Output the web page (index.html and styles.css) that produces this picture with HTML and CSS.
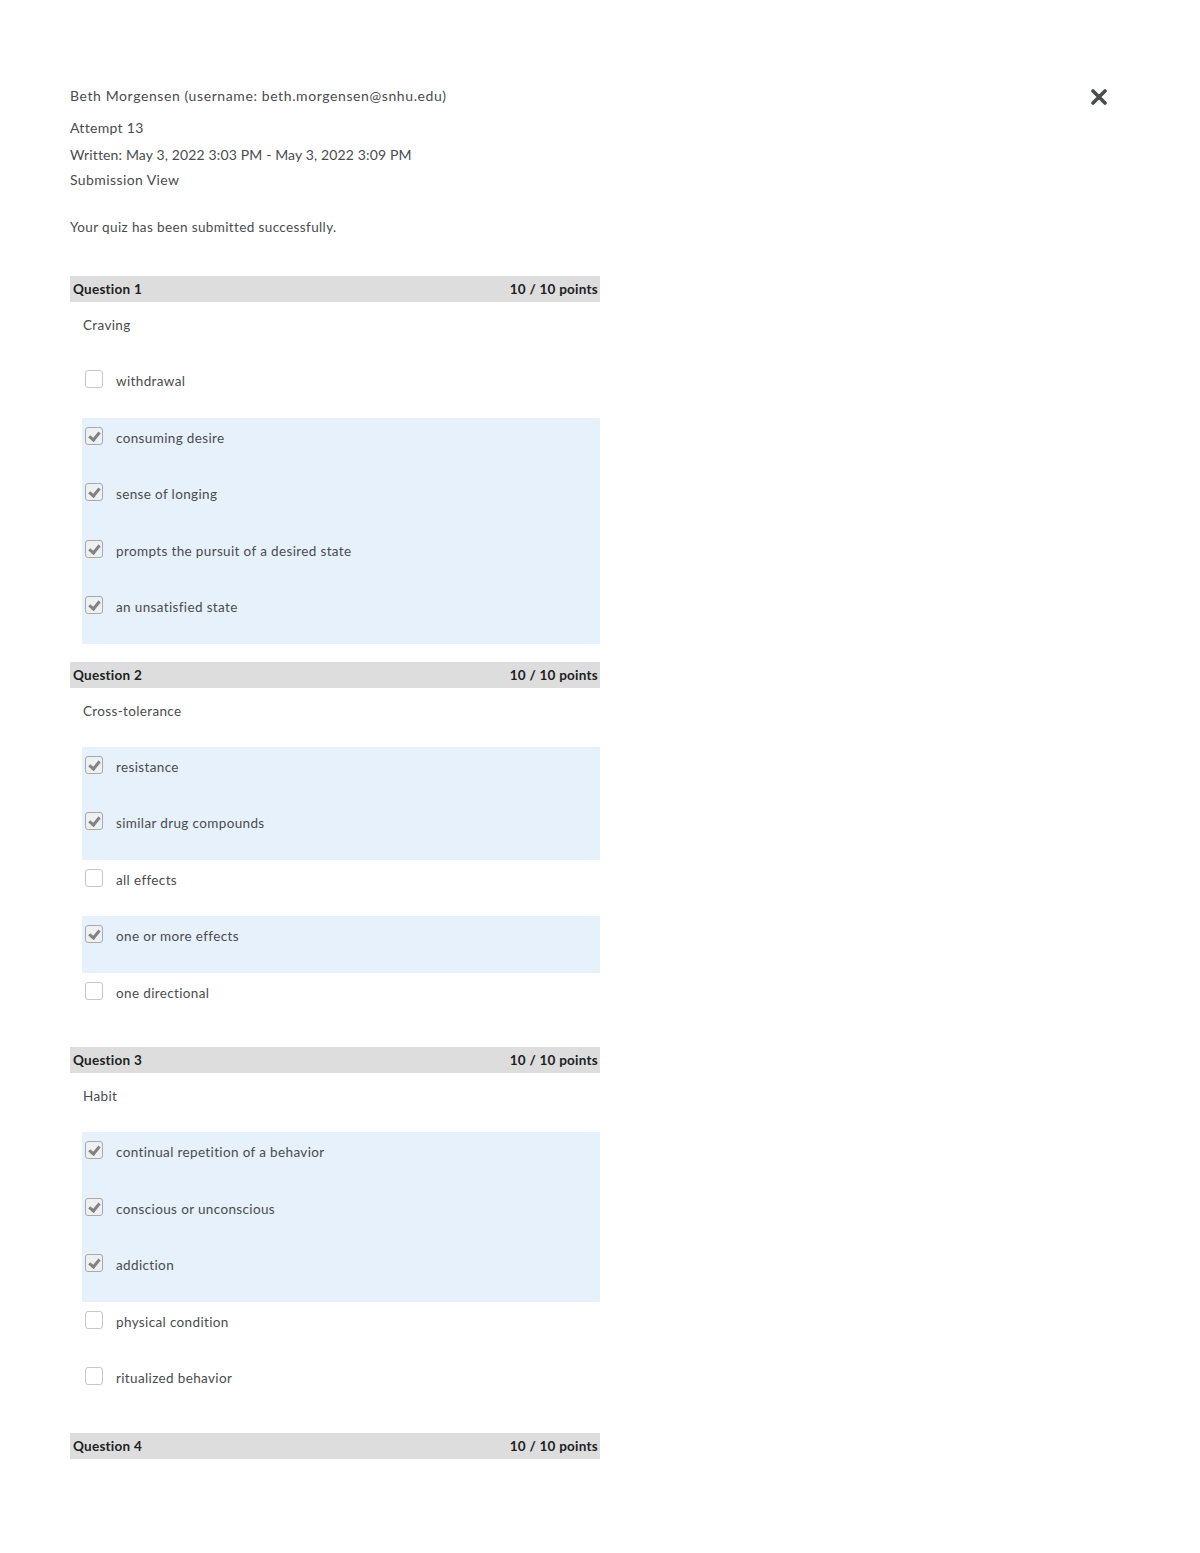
FILE: index.html
```html
<!DOCTYPE html>
<html>
<head>
<meta charset="utf-8">
<link rel="stylesheet" href="styles.css">
</head>
<body>
<div class="page">
  <div class="top">
    <div class="name">Beth Morgensen (username: beth.morgensen@snhu.edu)</div>
    <svg class="close" width="16" height="16" viewBox="0 0 16 16"><path d="M2 2 L14 14 M14 2 L2 14" stroke="#494c4e" stroke-width="3.6" stroke-linecap="round"/></svg>
  </div>
  <div class="attempt">Attempt 13</div>
  <div class="written">Written: May 3, 2022 3:03 PM - May 3, 2022 3:09 PM</div>
  <div class="view">Submission View</div>
  <div class="success">Your quiz has been submitted successfully.</div>

  <div class="question">
    <div class="qhead"><span>Question 1</span><span>10 / 10 points</span></div>
    <div class="prompt">Craving</div>
    <div class="options">
      <div class="opt"><span class="cb"></span><span class="label">withdrawal</span></div>
      <div class="opt sel"><span class="cb on"></span><span class="label">consuming desire</span></div>
      <div class="opt sel"><span class="cb on"></span><span class="label">sense of longing</span></div>
      <div class="opt sel"><span class="cb on"></span><span class="label">prompts the pursuit of a desired state</span></div>
      <div class="opt sel"><span class="cb on"></span><span class="label">an unsatisfied state</span></div>
    </div>
  </div>

  <div class="question">
    <div class="qhead"><span>Question 2</span><span>10 / 10 points</span></div>
    <div class="prompt">Cross-tolerance</div>
    <div class="options">
      <div class="opt sel"><span class="cb on"></span><span class="label">resistance</span></div>
      <div class="opt sel"><span class="cb on"></span><span class="label">similar drug compounds</span></div>
      <div class="opt"><span class="cb"></span><span class="label">all effects</span></div>
      <div class="opt sel"><span class="cb on"></span><span class="label">one or more effects</span></div>
      <div class="opt"><span class="cb"></span><span class="label">one directional</span></div>
    </div>
  </div>

  <div class="question">
    <div class="qhead"><span>Question 3</span><span>10 / 10 points</span></div>
    <div class="prompt">Habit</div>
    <div class="options">
      <div class="opt sel"><span class="cb on"></span><span class="label">continual repetition of a behavior</span></div>
      <div class="opt sel"><span class="cb on"></span><span class="label">conscious or unconscious</span></div>
      <div class="opt sel"><span class="cb on"></span><span class="label">addiction</span></div>
      <div class="opt"><span class="cb"></span><span class="label">physical condition</span></div>
      <div class="opt"><span class="cb"></span><span class="label">ritualized behavior</span></div>
    </div>
  </div>

  <div class="question">
    <div class="qhead"><span>Question 4</span><span>10 / 10 points</span></div>
  </div>
</div>
</body>
</html>
```
FILE: styles.css
```css
html, body {
  margin: 0;
  padding: 0;
  background: #ffffff;
}
body {
  font-family: Lato, "Open Sans", Arial, sans-serif;
  color: #494c4e;
  font-size: 13.5px;
}
.page {
  padding: 86px 93px 0 70px;
}
.top {
  display: flex;
  justify-content: space-between;
  align-items: center;
  height: 20px;
  line-height: 20px;
}
.name {
  font-size: 14px;
  letter-spacing: 0.6px;
}
.close {
  display: block;
  margin-top: 2px;
}
.attempt {
  margin-top: 12px;
  line-height: 20px;
  font-size: 14px;
  letter-spacing: 0.3px;
}
.written {
  margin-top: 7px;
  line-height: 20px;
  font-size: 14px;
  letter-spacing: 0.14px;
}
.view {
  margin-top: 5px;
  line-height: 20px;
  font-size: 14px;
  letter-spacing: 0.4px;
}
.success {
  margin-top: 27px;
  line-height: 20px;
  font-size: 13.5px;
  letter-spacing: 0.38px;
}
.question {
  width: 530px;
}
.success + .question {
  margin-top: 39px;
}
.qhead {
  display: flex;
  justify-content: space-between;
  align-items: center;
  height: 26px;
  background: #dddddd;
  padding: 0 2px 0 3px;
  font-weight: bold;
  font-size: 13.5px;
  letter-spacing: 0.25px;
  color: #202122;
}
.prompt {
  height: 59px;
  box-sizing: border-box;
  padding: 13px 0 0 13px;
  line-height: 20px;
  letter-spacing: 0.35px;
}
.options {
  margin-left: 12px;
  margin-bottom: 18px;
}
.opt {
  display: flex;
  align-items: flex-start;
  height: 56.5px;
  letter-spacing: 0.36px;
}
.opt.sel {
  background: #e7f1fb;
}
.cb {
  width: 16px;
  height: 16px;
  margin: 9px 0 0 3px;
  border: 1px solid #c4c8cb;
  border-radius: 3px;
  background: #ffffff;
  flex: none;
  position: relative;
}
.cb.on {
  border-color: #a6aaad;
  background: #eef0f1;
}
.cb.on::after {
  content: "";
  position: absolute;
  left: 4.5px;
  top: 2px;
  width: 4px;
  height: 8px;
  border-right: 3px solid #808284;
  border-bottom: 3px solid #808284;
  transform: rotate(40deg);
}
.label {
  margin: 10px 0 0 13px;
  line-height: 20px;
}
```
